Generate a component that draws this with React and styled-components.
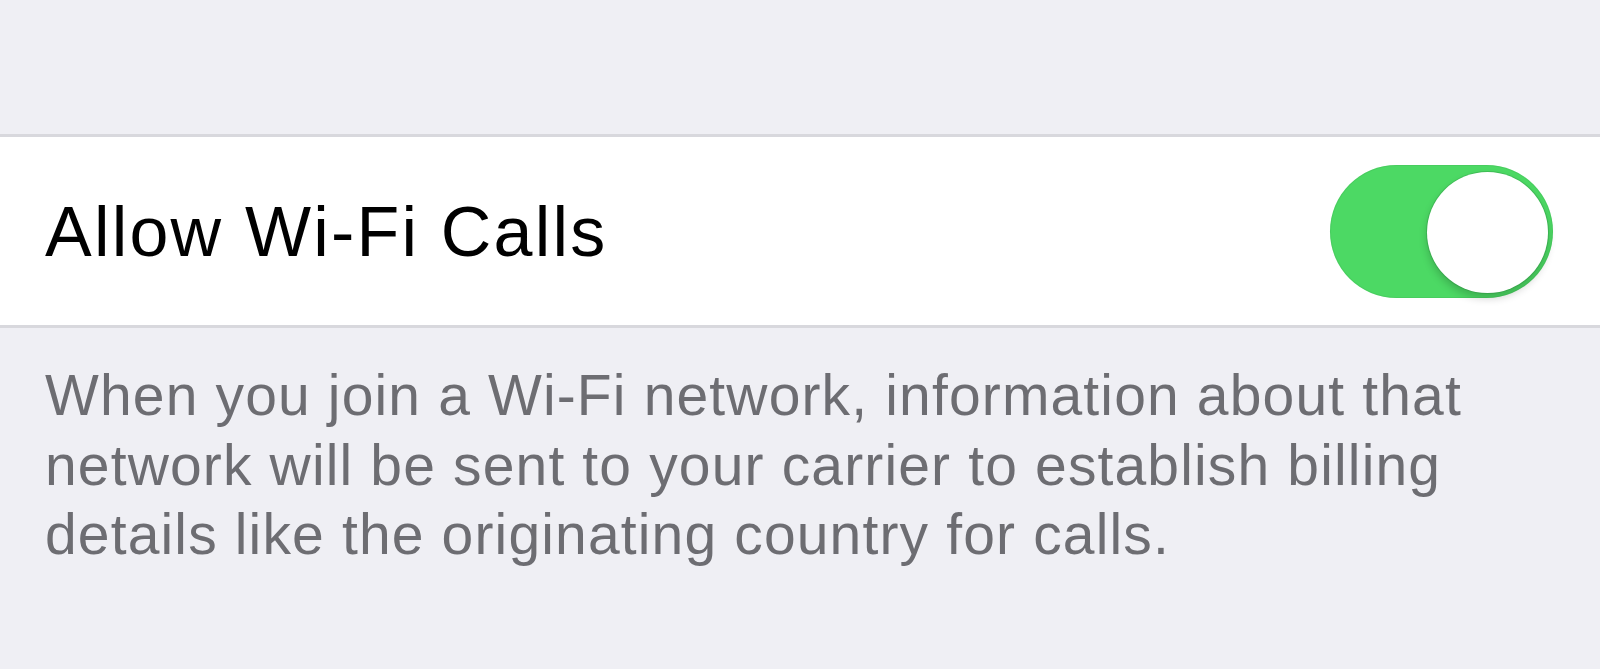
import React, { useState } from 'react';
import styled, { createGlobalStyle } from 'styled-components';

const GlobalStyle = createGlobalStyle`
  html, body {
    margin: 0;
    padding: 0;
    background: #efeff4;
  }
  body {
    font-family: "Liberation Sans", Arial, Helvetica, sans-serif;
    -webkit-font-smoothing: antialiased;
  }
`;

const Page = styled.div`
  min-height: 669px;
  background: #efeff4;
  padding-top: 134px;
  box-sizing: border-box;
`;

const Cell = styled.div`
  display: flex;
  align-items: center;
  justify-content: space-between;
  height: 188px;
  padding: 0 47px 0 45px;
  background: #ffffff;
  border-top: 3px solid #d8d8dd;
  border-bottom: 3px solid #d8d8dd;
`;

const Label = styled.div`
  font-size: 70px;
  color: #000000;
  letter-spacing: 2.2px;
  margin-top: 1px;
`;

const Track = styled.button`
  display: flex;
  align-items: center;
  justify-content: ${props => (props.on ? 'flex-end' : 'flex-start')};
  width: 223px;
  height: 133px;
  padding: 0 5px;
  border: none;
  border-radius: 67px;
  background: ${props => (props.on ? '#4cd964' : '#e5e5ea')};
  box-shadow: inset 0 0 0 1px rgba(60, 170, 80, 0.25);
  cursor: pointer;
  box-sizing: border-box;
`;

const Knob = styled.span`
  display: block;
  width: 121px;
  height: 121px;
  border-radius: 50%;
  background: #ffffff;
  margin-top: 3px;
  box-shadow: 0 0 0 1px rgba(30, 120, 50, 0.25), 0 5px 9px rgba(0, 0, 0, 0.2);
`;

const Footer = styled.p`
  margin: 0;
  padding: 33px 45px 0;
  font-size: 57px;
  line-height: 69.5px;
  letter-spacing: 1.15px;
  color: #6d6d72;
  max-width: 1460px;
`;

export default function App() {
  const [on, setOn] = useState(true);

  return (
    <Page>
      <GlobalStyle />
      <Cell>
        <Label>Allow Wi-Fi Calls</Label>
        <Track on={on ? 1 : 0} onClick={() => setOn(!on)}>
          <Knob />
        </Track>
      </Cell>
      <Footer>
        When you join a Wi-Fi network, information about that network will be sent to your carrier to establish billing details like the originating country for calls.
      </Footer>
    </Page>
  );
}
